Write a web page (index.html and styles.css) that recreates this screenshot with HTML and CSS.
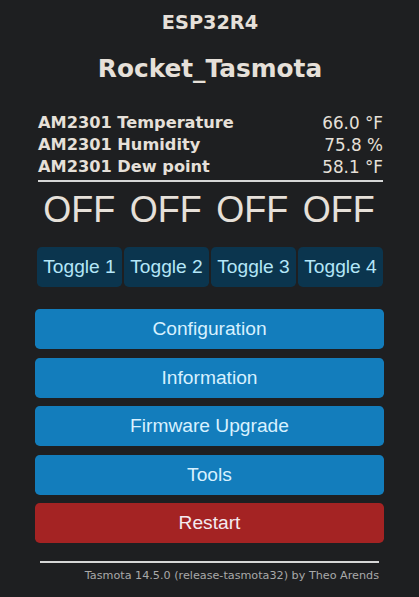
FILE: index.html
```html
<!DOCTYPE html>
<html lang="en">
<head>
    <meta charset="UTF-8">
    <meta name="viewport" content="width=device-width, initial-scale=1.0">
    <title>Rocket_Tasmota - Main Menu</title>
    <link rel="stylesheet" href="styles.css">
</head>
<body>
    <div class="page">
        <h3 class="device">ESP32R4</h3>
        <h2 class="name">Rocket_Tasmota</h2>

        <table class="sensors">
            <tr><th>AM2301 Temperature</th><td>66.0 °F</td></tr>
            <tr><th>AM2301 Humidity</th><td>75.8 %</td></tr>
            <tr><th>AM2301 Dew point</th><td>58.1 °F</td></tr>
        </table>

        <div class="states">
            <div>OFF</div>
            <div>OFF</div>
            <div>OFF</div>
            <div>OFF</div>
        </div>

        <div class="toggles">
            <button>Toggle 1</button>
            <button>Toggle 2</button>
            <button>Toggle 3</button>
            <button>Toggle 4</button>
        </div>

        <div class="menu">
            <button>Configuration</button>
            <button>Information</button>
            <button>Firmware Upgrade</button>
            <button>Tools</button>
            <button class="restart">Restart</button>
        </div>

        <div class="footer">Tasmota 14.5.0 (release-tasmota32) by Theo Arends</div>
    </div>
</body>
</html>
```

FILE: styles.css
```css
body {
    margin: 0;
    padding: 0;
    background-color: #1e1f21;
    color: #e6e0d9;
    font-family: 'DejaVu Sans', Verdana, sans-serif;
}
.page {
    width: 349px;
    margin: 0 auto;
    padding-left: 1px;
    box-sizing: border-box;
}
.device {
    margin: 12px 0 0;
    font-size: 19.3px;
    line-height: 22px;
    text-align: center;
}
.name {
    margin: 21px 0 0;
    font-size: 24.8px;
    line-height: 28px;
    text-align: center;
}
.sensors {
    width: 345px;
    margin: 29px 0 0 2px;
    border-collapse: collapse;
    font-size: 16.2px;
    line-height: 22px;
    border-bottom: 2px solid #d6d6d6;
}
.sensors th {
    padding: 0;
    text-align: left;
    font-weight: bold;
}
.sensors td {
    padding: 0;
    text-align: right;
    font-size: 16.8px;
}
.sensors tr:last-child th,
.sensors tr:last-child td {
    padding-bottom: 2px;
}
.states {
    display: grid;
    grid-template-columns: repeat(4, 1fr);
    width: 346px;
    margin-top: 8px;
    font-family: 'Liberation Sans', Arial, sans-serif;
    font-size: 36px;
    line-height: 40px;
    text-align: center;
}
.toggles {
    display: grid;
    grid-template-columns: repeat(4, 1fr);
    gap: 2px;
    width: 346px;
    margin: 17px 0 0 1px;
}
button {
    border: none;
    border-radius: 4.8px;
    font-family: 'Liberation Sans', Arial, sans-serif;
    font-size: 19.2px;
    height: 40px;
    padding: 0;
    cursor: pointer;
}
.toggles button {
    background-color: #0b354e;
    color: #b4e6f8;
}
.menu {
    display: flex;
    flex-direction: column;
    gap: 8.5px;
    margin: 22px 0 0 -1px;
}
.menu button {
    width: 349px;
    background-color: #137dbc;
    color: #d8f1ff;
}
.menu button.restart {
    background-color: #a42323;
    color: #f4eaf0;
}
.footer {
    margin: 18px 5px 0 4px;
    padding-top: 6px;
    border-top: 2px solid #d6d6d6;
    font-size: 11.2px;
    line-height: 14px;
    color: #a9a9a9;
    text-align: right;
}
```
